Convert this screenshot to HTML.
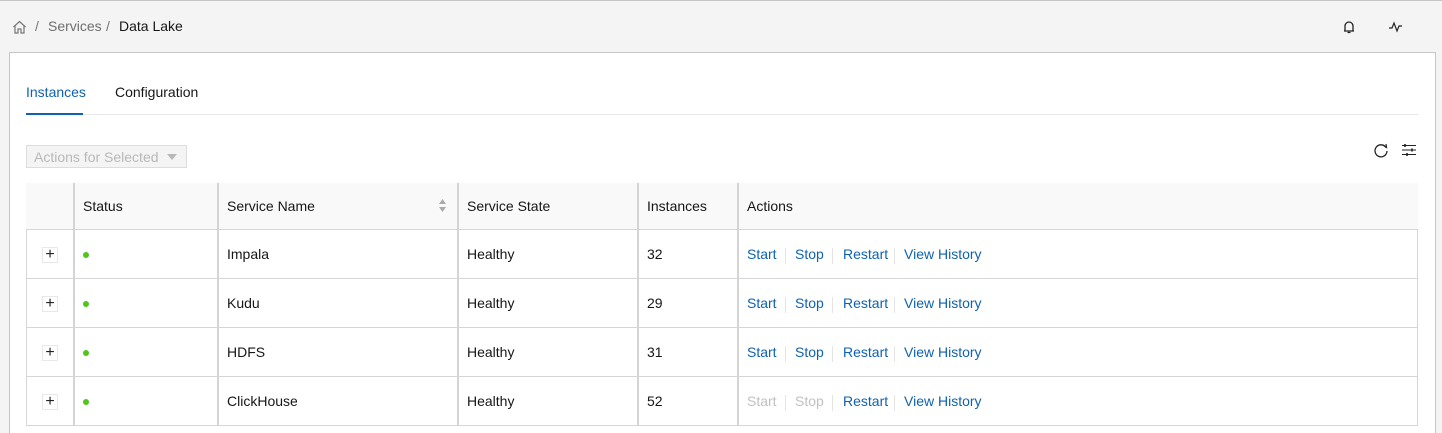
<!DOCTYPE html>
<html style="overflow:hidden;height:433px"><head><style>
*{margin:0;padding:0;box-sizing:border-box}
body{width:1442px;height:433px;background:#f4f4f4;font-family:"Liberation Sans",sans-serif;font-size:14px;color:#161616;position:relative;overflow:hidden;border-top:1px solid #c6c6c6}
.a{position:absolute;white-space:nowrap;margin-top:-1px}
.card{position:absolute;left:9px;top:51px;width:1427px;height:395px;background:#fff;border:1px solid #c6c6c6}
.hdr{position:absolute;left:26px;top:182px;width:1392px;height:47px;background:#f9f9f9;border-bottom:1px solid #d6d6d6}
.row{position:absolute;left:26px;width:1392px;height:49px;border-bottom:1px solid #d6d6d6;border-left:1px solid #d6d6d6;border-right:1px solid #d6d6d6}
.v{position:absolute;top:182px;height:243px;width:2px;background:#d4d4d4}
.lk{color:#0f62b0}
.dis{color:#c1c1c1}
.sep{position:absolute;width:1px;height:16px;background:#e4e4e4}
.plus{position:absolute;left:42px;width:16px;height:16px;border:1px solid #e8e8e8;font-size:16px;line-height:13px;text-align:center;color:#222}
.dot{position:absolute;left:83px;width:6px;height:6px;border-radius:50%;background:#52c41a}
</style></head><body>
<svg class="a" style="left:12px;top:20px" width="15" height="14" viewBox="0 0 15 14"><path d="M1.5 7 L7.5 1.5 L13.5 7 M3 5.8 V13 H6 V9 H9 V13 H12 V5.8" fill="none" stroke="#777" stroke-width="1.2"/></svg>
<div class="a" style="left:35px;top:18px;color:#777">/</div>
<div class="a" style="left:48px;top:18px;color:#6f6f6f">Services</div>
<div class="a" style="left:106px;top:18px;color:#777">/</div>
<div class="a" style="left:119px;top:18px">Data Lake</div>
<svg class="a" style="left:1342px;top:20px" width="14" height="15" viewBox="0 0 14 15"><path d="M3 11 V6 A4 4 0 0 1 11 6 V11 Z M2 11 H12 M5.5 12.5 H8.5" fill="none" stroke="#222" stroke-width="1.3"/></svg>
<svg class="a" style="left:1388px;top:20px" width="16" height="14" viewBox="0 0 16 14"><path d="M1 8 L4 8 L6 3 L9 11 L11 6 L14 6" fill="none" stroke="#222" stroke-width="1.2"/></svg>
<div class="card"></div>
<div class="a" style="left:26px;top:84px;color:#0f62b0">Instances</div>
<div class="a" style="left:115px;top:84px">Configuration</div>
<div class="a" style="left:26px;top:113px;width:1392px;height:1px;background:#e8e8e8;margin:0"></div>
<div class="a" style="left:26px;top:112px;width:57px;height:2px;background:#0f62b0;margin:0"></div>
<div class="a" style="left:26px;top:144px;width:161px;height:23px;background:#f4f4f4;border:1px solid #ddd;color:#b8b8b8;padding:3px 0 0 7px;margin:0">Actions for Selected</div>
<svg class="a" style="left:166px;top:152px;margin:0" width="12" height="8"><path d="M1 1 H11 L6 7Z" fill="#b8b8b8"/></svg>
<svg class="a" style="left:1373px;top:143px" width="16" height="16" viewBox="0 0 16 16"><path d="M13 4.5 A6 6 0 1 0 14 8" fill="none" stroke="#222" stroke-width="1.3"/><path d="M10 2 L13.5 4.5 L13 1" fill="none" stroke="#222" stroke-width="1.2"/></svg>
<svg class="a" style="left:1401px;top:142px" width="16" height="16" viewBox="0 0 16 16"><path d="M1 3.5H15M1 8H15M1 12.5H15" stroke="#222" stroke-width="1"/><path d="M4 2v3M11 6.5v3M6 11v3" stroke="#222" stroke-width="1.6"/></svg>
<div class="hdr"></div>
<div class="a" style="left:83px;top:198px">Status</div>
<div class="a" style="left:227px;top:198px">Service Name</div>
<svg class="a" style="left:438px;top:198px" width="9" height="16"><path d="M1 6 L4.5 1 L8 6Z M1 9 L4.5 14 L8 9Z" fill="#aaa"/></svg>
<div class="a" style="left:467px;top:198px">Service State</div>
<div class="a" style="left:647px;top:198px">Instances</div>
<div class="a" style="left:747px;top:198px">Actions</div>

<div class="row" style="top:229px"></div>
<div class="row" style="top:278px"></div>
<div class="row" style="top:327px"></div>
<div class="row" style="top:376px"></div>
<div class="v" style="left:73px"></div><div class="v" style="left:217px"></div><div class="v" style="left:457px"></div><div class="v" style="left:637px"></div><div class="v" style="left:737px"></div>

<div class="plus" style="top:246px">+</div><div class="dot" style="top:251px"></div>
<div class="a" style="left:227px;top:246px">Impala</div><div class="a" style="left:467px;top:246px">Healthy</div><div class="a" style="left:647px;top:246px">32</div>
<div class="a lk" style="left:747px;top:246px">Start</div><div class="sep" style="left:785px;top:247px"></div><div class="a lk" style="left:795px;top:246px">Stop</div><div class="sep" style="left:832px;top:247px"></div><div class="a lk" style="left:843px;top:246px">Restart</div><div class="sep" style="left:894px;top:247px"></div><div class="a lk" style="left:904px;top:246px">View History</div>

<div class="plus" style="top:295px">+</div><div class="dot" style="top:300px"></div>
<div class="a" style="left:227px;top:295px">Kudu</div><div class="a" style="left:467px;top:295px">Healthy</div><div class="a" style="left:647px;top:295px">29</div>
<div class="a lk" style="left:747px;top:295px">Start</div><div class="sep" style="left:785px;top:296px"></div><div class="a lk" style="left:795px;top:295px">Stop</div><div class="sep" style="left:832px;top:296px"></div><div class="a lk" style="left:843px;top:295px">Restart</div><div class="sep" style="left:894px;top:296px"></div><div class="a lk" style="left:904px;top:295px">View History</div>

<div class="plus" style="top:344px">+</div><div class="dot" style="top:349px"></div>
<div class="a" style="left:227px;top:344px">HDFS</div><div class="a" style="left:467px;top:344px">Healthy</div><div class="a" style="left:647px;top:344px">31</div>
<div class="a lk" style="left:747px;top:344px">Start</div><div class="sep" style="left:785px;top:345px"></div><div class="a lk" style="left:795px;top:344px">Stop</div><div class="sep" style="left:832px;top:345px"></div><div class="a lk" style="left:843px;top:344px">Restart</div><div class="sep" style="left:894px;top:345px"></div><div class="a lk" style="left:904px;top:344px">View History</div>

<div class="plus" style="top:393px">+</div><div class="dot" style="top:398px"></div>
<div class="a" style="left:227px;top:393px">ClickHouse</div><div class="a" style="left:467px;top:393px">Healthy</div><div class="a" style="left:647px;top:393px">52</div>
<div class="a dis" style="left:747px;top:393px">Start</div><div class="sep" style="left:785px;top:394px"></div><div class="a dis" style="left:795px;top:393px">Stop</div><div class="sep" style="left:832px;top:394px"></div><div class="a lk" style="left:843px;top:393px">Restart</div><div class="sep" style="left:894px;top:394px"></div><div class="a lk" style="left:904px;top:393px">View History</div>
</body></html>
